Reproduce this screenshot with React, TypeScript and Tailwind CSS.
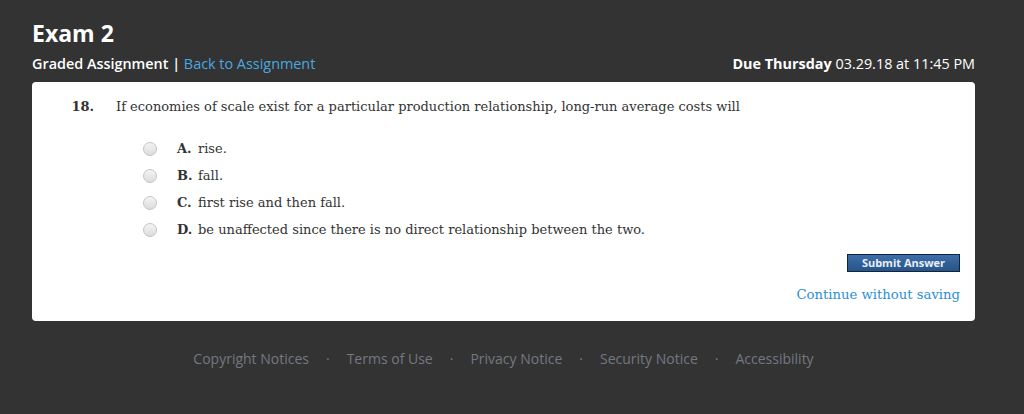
import React from "react";

const serif = { fontFamily: '"DejaVu Serif", "Liberation Serif", serif' };

function Radio() {
  return (
    <span className="inline-block shrink-0 w-[14px] h-[14px] rounded-full border border-[#c4c4c4] bg-gradient-to-b from-[#f4f4f4] to-[#dcdcdc]" />
  );
}

export default function App() {
  const options = [
    ["A.", "rise."],
    ["B.", "fall."],
    ["C.", "first rise and then fall."],
    ["D.", "be unaffected since there is no direct relationship between the two."],
  ];
  const footer = ["Copyright Notices", "Terms of Use", "Privacy Notice", "Security Notice", "Accessibility"];
  return (
    <div className="w-[1024px] h-[414px] bg-[#333333] font-['Open_Sans',sans-serif] overflow-hidden">
      <div className="pl-[32px] pr-[49px] pt-[18px]">
        <h1 className="text-white text-[23px] font-bold leading-[30px]">Exam 2</h1>
        <div className="flex justify-between items-end mt-[6px] text-[14.4px] text-white leading-[20px]">
          <div className="font-semibold">
            Graded Assignment | <span className="text-[#4aa8e0] font-normal">Back to Assignment</span>
          </div>
          <div>
            <span className="font-bold">Due Thursday</span> 03.29.18 at 11:45 PM
          </div>
        </div>
        <div className="mt-[8px] bg-white rounded-[4px] h-[239px] pt-[16px] pr-[15px]" style={serif}>
          <div className="flex text-[13px] text-[#333] leading-[18px]">
            <span className="w-[84px] text-right pr-[22px] font-bold">18.</span>
            <span>If economies of scale exist for a particular production relationship, long-run average costs will</span>
          </div>
          <div className="mt-[24px] pl-[111px] flex flex-col gap-[9px]">
            {options.map(([l, t]) => (
              <div key={l} className="flex items-center h-[18px] text-[13px] text-[#333]">
                <Radio />
                <span className="ml-[20px] font-bold w-[21px]">{l}</span>
                <span>{t}</span>
              </div>
            ))}
          </div>
          <div className="flex flex-col items-end mt-[15px]">
            <button className="w-[113px] h-[18px] bg-gradient-to-b from-[#3c6ea8] to-[#285488] border border-[#10233f] text-[#e8eef6] text-[11px] font-bold leading-[16px] font-['Open_Sans',sans-serif]">
              Submit Answer
            </button>
            <a className="mt-[13px] text-[13.2px] text-[#2b8fd6]">Continue without saving</a>
          </div>
        </div>
        <div className="flex justify-center items-center mt-[27px] text-[14px] text-[#737880]">
          {footer.map((f, i) => (
            <React.Fragment key={f}>
              {i > 0 && <span className="mx-[17px]">·</span>}
              <span>{f}</span>
            </React.Fragment>
          ))}
        </div>
      </div>
    </div>
  );
}
